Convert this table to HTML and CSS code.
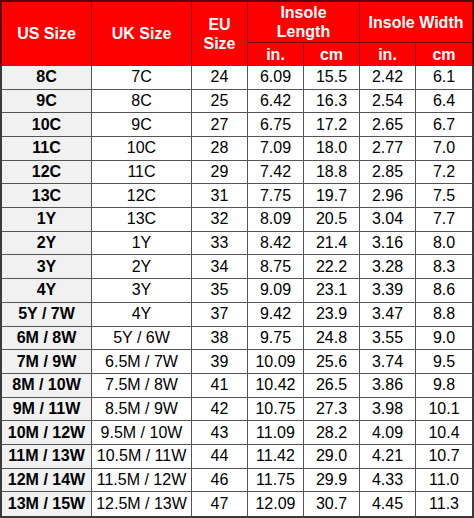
FILE: index.html
```html
<!DOCTYPE html>
<html lang="en">
<head>
<meta charset="utf-8">
<title>Kids Shoe Size Chart</title>
<link rel="stylesheet" href="styles.css">
</head>
<body>
<div class="chart">
  <div class="h h-us">US Size</div>
  <div class="h h-uk">UK Size</div>
  <div class="h h-eu">EU<br>Size</div>
  <div class="h h-len">Insole<br>Length</div>
  <div class="h h-wid last">Insole Width</div>
  <div class="h sub">in.</div>
  <div class="h sub">cm</div>
  <div class="h sub">in.</div>
  <div class="h sub last">cm</div>

  <div class="c us">8C</div><div class="c">7C</div><div class="c">24</div><div class="c">6.09</div><div class="c">15.5</div><div class="c">2.42</div><div class="c last">6.1</div>
  <div class="c us">9C</div><div class="c">8C</div><div class="c">25</div><div class="c">6.42</div><div class="c">16.3</div><div class="c">2.54</div><div class="c last">6.4</div>
  <div class="c us">10C</div><div class="c">9C</div><div class="c">27</div><div class="c">6.75</div><div class="c">17.2</div><div class="c">2.65</div><div class="c last">6.7</div>
  <div class="c us">11C</div><div class="c">10C</div><div class="c">28</div><div class="c">7.09</div><div class="c">18.0</div><div class="c">2.77</div><div class="c last">7.0</div>
  <div class="c us">12C</div><div class="c">11C</div><div class="c">29</div><div class="c">7.42</div><div class="c">18.8</div><div class="c">2.85</div><div class="c last">7.2</div>
  <div class="c us">13C</div><div class="c">12C</div><div class="c">31</div><div class="c">7.75</div><div class="c">19.7</div><div class="c">2.96</div><div class="c last">7.5</div>
  <div class="c us">1Y</div><div class="c">13C</div><div class="c">32</div><div class="c">8.09</div><div class="c">20.5</div><div class="c">3.04</div><div class="c last">7.7</div>
  <div class="c us">2Y</div><div class="c">1Y</div><div class="c">33</div><div class="c">8.42</div><div class="c">21.4</div><div class="c">3.16</div><div class="c last">8.0</div>
  <div class="c us">3Y</div><div class="c">2Y</div><div class="c">34</div><div class="c">8.75</div><div class="c">22.2</div><div class="c">3.28</div><div class="c last">8.3</div>
  <div class="c us">4Y</div><div class="c">3Y</div><div class="c">35</div><div class="c">9.09</div><div class="c">23.1</div><div class="c">3.39</div><div class="c last">8.6</div>
  <div class="c us">5Y / 7W</div><div class="c">4Y</div><div class="c">37</div><div class="c">9.42</div><div class="c">23.9</div><div class="c">3.47</div><div class="c last">8.8</div>
  <div class="c us">6M / 8W</div><div class="c">5Y / 6W</div><div class="c">38</div><div class="c">9.75</div><div class="c">24.8</div><div class="c">3.55</div><div class="c last">9.0</div>
  <div class="c us">7M / 9W</div><div class="c">6.5M / 7W</div><div class="c">39</div><div class="c">10.09</div><div class="c">25.6</div><div class="c">3.74</div><div class="c last">9.5</div>
  <div class="c us">8M / 10W</div><div class="c">7.5M / 8W</div><div class="c">41</div><div class="c">10.42</div><div class="c">26.5</div><div class="c">3.86</div><div class="c last">9.8</div>
  <div class="c us">9M / 11W</div><div class="c">8.5M / 9W</div><div class="c">42</div><div class="c">10.75</div><div class="c">27.3</div><div class="c">3.98</div><div class="c last">10.1</div>
  <div class="c us">10M / 12W</div><div class="c">9.5M / 10W</div><div class="c">43</div><div class="c">11.09</div><div class="c">28.2</div><div class="c">4.09</div><div class="c last">10.4</div>
  <div class="c us">11M / 13W</div><div class="c">10.5M / 11W</div><div class="c">44</div><div class="c">11.42</div><div class="c">29.0</div><div class="c">4.21</div><div class="c last">10.7</div>
  <div class="c us">12M / 14W</div><div class="c">11.5M / 12W</div><div class="c">46</div><div class="c">11.75</div><div class="c">29.9</div><div class="c">4.33</div><div class="c last">11.0</div>
  <div class="c us bottom">13M / 15W</div><div class="c bottom">12.5M / 13W</div><div class="c bottom">47</div><div class="c bottom">12.09</div><div class="c bottom">30.7</div><div class="c bottom">4.45</div><div class="c last bottom">11.3</div>
</div>
</body>
</html>
```

FILE: styles.css
```css
html, body {
  margin: 0;
  padding: 0;
  background: #ffffff;
}

.chart {
  width: 474px;
  height: 518px;
  box-sizing: border-box;
  border-top: 2px solid #5a0000;
  border-bottom: 2px solid #3a3a3a;
  display: grid;
  grid-template-columns: 92px 100px 56px 56px 56px 56px 58px;
  grid-template-rows: 41px 23px repeat(19, 1fr);
  font-family: "Liberation Sans", Arial, sans-serif;
  font-size: 16px;
  color: #000000;
}

.h, .c {
  box-sizing: border-box;
  display: flex;
  align-items: center;
  justify-content: center;
  text-align: center;
  white-space: nowrap;
}

.h {
  background: #ff0000;
  color: #ffffff;
  font-weight: bold;
  line-height: 19px;
  border-right: 1px solid #7a0000;
  border-bottom: 1px solid #7a0000;
}

.h-us {
  grid-row: 1 / 3;
  border-left: 2px solid #5a0000;
  border-bottom-color: #4a4a4a;
}

.h-uk, .h-eu {
  grid-row: 1 / 3;
  border-bottom-color: #4a4a4a;
}

.h-len, .h-wid {
  grid-column: span 2;
}

.sub {
  border-bottom-color: #4a4a4a;
}

.h.last {
  border-right: 2px solid #5a0000;
}

.c {
  background: #ffffff;
  border-right: 1px solid #555555;
  border-bottom: 1px solid #555555;
}

.c.us {
  background: #f1f1f1;
  font-weight: bold;
  border-left: 2px solid #3a3a3a;
}

.c.last {
  border-right: 2px solid #3a3a3a;
}

.c.bottom {
  border-bottom: none;
}
```
